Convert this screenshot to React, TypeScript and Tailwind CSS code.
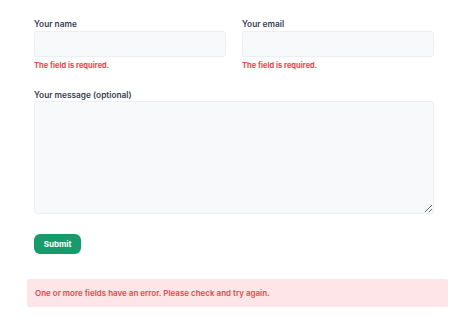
// Contact form with validation errors
const font = { fontFamily: 'Inter, "Noto Sans", sans-serif' };

function Field({ label, error }: { label: string; error?: string }) {
  return (
    <div className="flex flex-col">
      <label className="text-[8.3px] font-semibold leading-[12px] text-[#374151] mb-[1px]">{label}</label>
      <input
        type="text"
        className="h-[26px] w-full rounded-[3px] border border-[#eceef1] bg-[#f8f9fb] outline-none"
      />
      {error && (
        <p className="mt-[4px] text-[7.5px] font-bold leading-[10px] text-[#ef4444]">{error}</p>
      )}
    </div>
  );
}

export default function App() {
  return (
    <div className="w-[474px] h-[333px] bg-white px-[27px] pt-[18px]" style={font}>
      <div className="ml-[7px] w-[400px]">
        <div className="grid grid-cols-2 gap-[16px]">
          <Field label="Your name" error="The field is required." />
          <Field label="Your email" error="The field is required." />
        </div>

        <div className="mt-[18px] flex flex-col">
          <label className="text-[8.3px] font-semibold leading-[12px] text-[#374151]">
            Your message (optional)
          </label>
          <textarea className="h-[113px] w-full rounded-[3px] border border-[#eceef1] bg-[#f8f9fb] outline-none" />
        </div>

        <button className="mt-[20px] h-[20px] w-[47px] rounded-[6px] bg-[#169c6c] text-[8px] font-bold text-white">
          Submit
        </button>
      </div>

      <div className="mt-[25px] w-[421px] h-[28px] flex items-center rounded-[2px] bg-[#fee5e7] px-[8px]">
        <p className="text-[8px] font-semibold text-[#e5484d]">
          One or more fields have an error. Please check and try again.
        </p>
      </div>
    </div>
  );
}
